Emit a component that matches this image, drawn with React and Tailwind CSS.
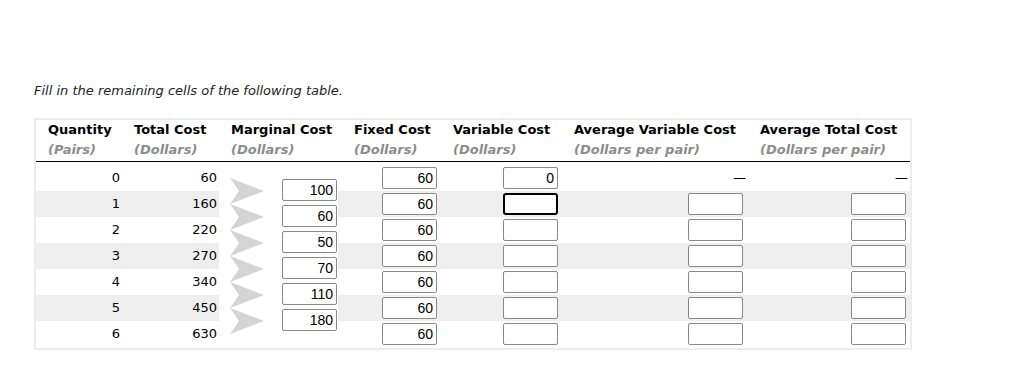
import React from "react";

const rows = [
  { q: 0, tc: 60, fc: 60, vc: "0", dash: true },
  { q: 1, tc: 160, fc: 60, vc: "", focus: true },
  { q: 2, tc: 220, fc: 60, vc: "" },
  { q: 3, tc: 270, fc: 60, vc: "" },
  { q: 4, tc: 340, fc: 60, vc: "" },
  { q: 5, tc: 450, fc: 60, vc: "" },
  { q: 6, tc: 630, fc: 60, vc: "" },
];

const marginal = [100, 60, 50, 70, 110, 180];

const headers = [
  { title: "Quantity", unit: "(Pairs)", w: "w-[86px]" },
  { title: "Total Cost", unit: "(Dollars)", w: "w-[97px] pl-[11px]" },
  { title: "Marginal Cost", unit: "(Dollars)", w: "w-[123px] pl-[11px]" },
  { title: "Fixed Cost", unit: "(Dollars)", w: "w-[99px]" },
  { title: "Variable Cost", unit: "(Dollars)", w: "w-[121px]" },
  { title: "Average Variable Cost", unit: "(Dollars per pair)", w: "w-[186px]" },
  { title: "Average Total Cost", unit: "(Dollars per pair)", w: "w-[162px]" },
];

function Box({ value, focus }) {
  return (
    <input
      type="text"
      readOnly
      value={value}
      className={
        "w-[55px] h-[22px] bg-white text-right pr-[3px] text-[14px] text-black outline-none font-['Liberation_Sans',Arial,sans-serif] " +
        (focus ? "border-2 border-black rounded-[3px]" : "border border-[#8a8a8a] rounded-[2px]")
      }
    />
  );
}

function Arrow() {
  return (
    <svg width="34" height="26" viewBox="0 0 34 26" className="overflow-visible block">
      <polygon points="0,0 34,13 0,26 9,13" fill="#d4d4d4" />
    </svg>
  );
}

export default function App() {
  return (
    <div className="min-h-screen bg-white pt-[82px] pl-[34px] font-['DejaVu_Sans',Verdana,sans-serif] text-[13px] text-black">
      <p className="italic leading-[18px] text-[#222]">
        Fill in the remaining cells of the following table.
      </p>

      <div className="mt-[18px] w-[878px] border-2 border-[#ececec]">
        {/* header */}
        <div className="flex border-b border-black">
          {headers.map((h) => (
            <div key={h.title} className={"pl-[12px] " + h.w}>
              <div className="font-bold leading-[19px] whitespace-nowrap">{h.title}</div>
              <div className="font-bold italic text-[#8c8c8c] leading-[22px] whitespace-nowrap">{h.unit}</div>
            </div>
          ))}
        </div>

        {/* body */}
        <div className="flex pt-[3px] pb-[1px]">
          <div className="flex flex-col w-[183px]">
            {rows.map((r, i) => (
              <div key={i} className={"flex h-[26px] items-center " + (i % 2 ? "bg-[#eeeeee]" : "")}>
                <div className="w-[86px] text-right pr-[2px]">{r.q}</div>
                <div className="w-[97px] text-right pr-[2px]">{r.tc}</div>
              </div>
            ))}
          </div>

          <div className="flex w-[119px]">
            <div className="flex flex-col pt-[13px] pl-[11px] w-[63px]">
              {marginal.map((m) => (
                <div key={m} className="h-[26px]">
                  <Arrow />
                </div>
              ))}
            </div>
            <div className="flex flex-col pt-[14px] gap-[4px]">
              {marginal.map((m) => (
                <Box key={m} value={String(m)} />
              ))}
            </div>
          </div>

          <div className="flex flex-col w-[572px]">
            {rows.map((r, i) => (
              <div key={i} className={"flex h-[26px] items-center " + (i % 2 ? "bg-[#eeeeee]" : "")}>
                <div className="w-[103px] flex justify-end pr-[4px]">
                  <Box value={String(r.fc)} />
                </div>
                <div className="w-[121px] flex justify-end pr-[4px]">
                  <Box value={r.vc} focus={r.focus} />
                </div>
                <div className="w-[186px] flex justify-end pr-[5px]">
                  {r.dash ? <span className="mr-[-3px]">—</span> : <Box value="" />}
                </div>
                <div className="w-[162px] flex justify-end pr-[4px]">
                  {r.dash ? <span className="mr-[-2px]">—</span> : <Box value="" />}
                </div>
              </div>
            ))}
          </div>
        </div>
      </div>
    </div>
  );
}
